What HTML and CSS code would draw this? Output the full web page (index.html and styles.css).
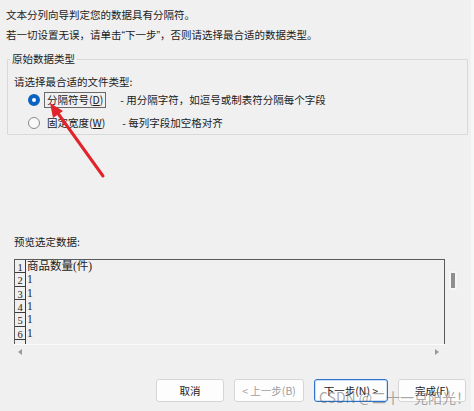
FILE: index.html
```html
<!DOCTYPE html>
<html lang="zh-CN">
<head>
<meta charset="utf-8">
<title>文本分列向导</title>
<link rel="stylesheet" href="styles.css">
</head>
<body>
<div class="dialog">
  <p class="line l1">文本分列向导判定您的数据具有分隔符。</p>
  <p class="line l2">若一切设置无误，请单击<span class="q">“</span>下一步<span class="q">”</span>，否则请选择最合适的数据类型。</p>

  <fieldset class="group">
    <legend class="legend">原始数据类型</legend>
    <p class="line hint">请选择最合适的文件类型:</p>
    <div class="radio-row r1">
      <span class="radio checked"></span>
      <span class="rlabel focus">分隔符号(<u>D</u>)</span>
      <span class="desc">- 用分隔字符，如逗号或制表符分隔每个字段</span>
    </div>
    <div class="radio-row r2">
      <span class="radio"></span>
      <span class="rlabel">固定宽度(<u>W</u>)</span>
      <span class="desc">- 每列字段加空格对齐</span>
    </div>
  </fieldset>

  <p class="line preview-label">预览选定数据:</p>

  <div class="preview-wrap">
    <div class="preview">
      <div class="rows">
        <div class="row"><span class="num">1</span><span class="cell">商品数量(件)</span></div>
        <div class="row"><span class="num">2</span><span class="cell">1</span></div>
        <div class="row"><span class="num">3</span><span class="cell">1</span></div>
        <div class="row"><span class="num">4</span><span class="cell">1</span></div>
        <div class="row"><span class="num">5</span><span class="cell">1</span></div>
        <div class="row"><span class="num">6</span><span class="cell">1</span></div>
        <div class="row"><span class="num"></span><span class="cell"></span></div>
      </div>
      <div class="hscroll">
        <span class="arrow left"></span>
        <span class="arrow right"></span>
      </div>
    </div>
    <div class="vscroll"><span class="thumb"></span></div>
  </div>

  <div class="buttons">
    <button class="btn w68">取消</button>
    <button class="btn w70 disabled">&lt; 上一步(B)</button>
    <button class="btn w74 default">下一步(N) &gt;</button>
    <button class="btn w68">完成(F)</button>
  </div>

  <svg class="red-arrow" width="474" height="411" viewBox="0 0 474 411">
    <line x1="103" y1="176" x2="57" y2="112" stroke="#e3232c" stroke-width="3" stroke-linecap="round"/>
    <polygon points="50,103 63,111 53,118" fill="#e3232c"/>
  </svg>

  <div class="watermark">CSDN @二十一克阳光！</div>
</div>
</body>
</html>
```

FILE: styles.css
```css
html, body {
  margin: 0;
  padding: 0;
  background: #f0f0f0;
}

body {
  font-family: "Noto Sans CJK SC", "Noto Sans", sans-serif;
  font-size: 10.5px;
  color: #1b1b1b;
}

.dialog {
  position: relative;
  width: 474px;
  height: 411px;
  box-sizing: border-box;
  padding: 7px 0 0 6px;
  overflow: hidden;
  border-right: 3px solid #f7f7f7;
}

.line {
  margin: 0;
  line-height: 16px;
  white-space: nowrap;
}

.l2 {
  margin-top: 4px;
}

.q {
  font-family: "Liberation Sans", sans-serif;
}

.group {
  margin: 8px 3px 0 1px;
  padding: 0 6px 3px 6px;
  border: 1px solid #d9d9d9;
  border-radius: 1px;
}

.legend {
  margin-left: -4px;
  padding: 0 2px;
  line-height: 16px;
}

.hint {
  margin-top: 7px;
}

.radio-row {
  display: flex;
  align-items: center;
  height: 16px;
  line-height: 16px;
  white-space: nowrap;
}

.r1 {
  margin-top: 2px;
}

.r2 {
  margin-top: 7px;
}

.radio {
  width: 12px;
  height: 12px;
  box-sizing: border-box;
  border-radius: 50%;
  margin-left: 14px;
  border: 1px solid #8a8a8a;
  background: #f9f9f9;
}

.radio.checked {
  border: 4px solid #0a63c2;
  background: #ffffff;
}

.rlabel {
  margin-left: 4px;
  padding: 0 2px;
  border: 1px solid transparent;
  height: 14px;
  line-height: 14px;
}

.rlabel.focus {
  border-color: #6a6a6a;
}

.desc {
  margin-left: 14px;
}

.preview-label {
  margin-top: 99px;
  padding-left: 8px;
}

.preview-wrap {
  display: flex;
  margin-top: 9px;
  margin-left: 8px;
}

.preview {
  width: 431px;
}

.rows {
  height: 84px;
  overflow: hidden;
  border: 1px solid #5a5a5a;
  border-bottom: none;
  box-sizing: content-box;
}

.row {
  display: flex;
  height: 13.33px;
  line-height: 13px;
}

.num {
  flex: none;
  width: 11px;
  box-sizing: border-box;
  border-right: 1px solid #3c3c3c;
  border-bottom: 1px solid #3c3c3c;
  font-family: "Liberation Serif", serif;
  font-size: 10.5px;
  text-align: center;
  padding-top: 1px;
  color: #222;
}

.cell {
  padding-left: 1px;
  font-family: "Liberation Serif", "Noto Sans CJK SC", serif;
  font-size: 11.5px;
  line-height: 12px;
}

.hscroll {
  position: relative;
  height: 13px;
  border-top: 1px solid #fbfbfb;
}

.arrow {
  position: absolute;
  top: 4px;
  width: 0;
  height: 0;
  border-top: 3px solid transparent;
  border-bottom: 3px solid transparent;
}

.arrow.left {
  left: 4px;
  border-right: 4px solid #9a9a9a;
}

.arrow.right {
  right: 6px;
  border-left: 4px solid #9a9a9a;
}

.vscroll {
  width: 14px;
  padding-left: 4px;
  padding-top: 12px;
}

.thumb {
  display: block;
  width: 4px;
  height: 15px;
  background: #8f8f8f;
  border: 2px solid #f6f6f6;
  border-radius: 1px;
}

.buttons {
  display: flex;
  justify-content: flex-end;
  gap: 10px;
  margin-top: 21px;
  padding-right: 5px;
}

.btn {
  height: 23px;
  box-sizing: border-box;
  background: #fdfdfd;
  border: 1px solid #d6d6d6;
  border-radius: 3px;
  font-family: "Noto Sans CJK SC", "Noto Sans", sans-serif;
  font-size: 10.5px;
  color: #1b1b1b;
  padding: 0;
  line-height: 20px;
}

.w68 { width: 68px; }
.w70 { width: 70px; }
.w74 { width: 74px; }

.btn.disabled {
  color: #9d9d9d;
}

.btn.default {
  border: 1px solid #2a74c9;
  box-shadow: inset 0 0 0 1px #cfe0f4;
}

.red-arrow {
  position: absolute;
  left: 0;
  top: 0;
  pointer-events: none;
}

.watermark {
  position: absolute;
  left: 319px;
  top: 388px;
  font-size: 14px;
  line-height: 18px;
  color: rgba(95, 95, 95, 0.55);
  white-space: nowrap;
  pointer-events: none;
}
```
